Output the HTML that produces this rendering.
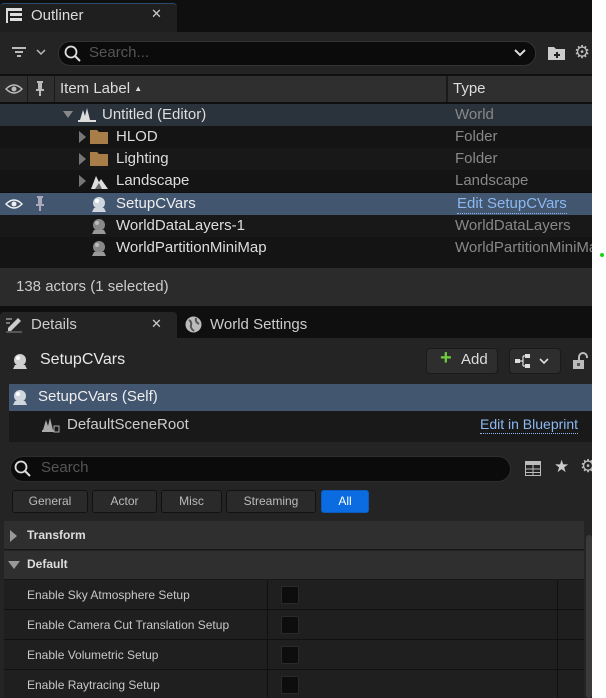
<!DOCTYPE html>
<html><head><meta charset="utf-8"><style>
*{margin:0;padding:0;box-sizing:border-box}
body{width:606px;height:698px;background:#fff;font-family:"Liberation Sans",sans-serif;position:relative;overflow:hidden;color:#c0c0c0}
.a{position:absolute}
.t{position:absolute;white-space:nowrap}
#main{position:absolute;left:0;top:0;width:592px;height:698px;background:#0f0f0f;overflow:hidden}
.row{position:absolute;left:0;width:592px;height:22px;font-size:15px;line-height:22px}
.prop{position:absolute;left:4px;width:580px;height:30px;background:#1f1f1f;border-bottom:1px solid #111;font-size:12px;line-height:30px}
.prop span{position:absolute;left:23px;color:#c8c8c8}
.prop i{position:absolute;left:263px;top:0;width:1px;height:30px;background:#111}
.prop b{position:absolute;left:277px;top:6px;width:18px;height:18px;background:#0d0d0d;border:1px solid #2a2a2a;border-radius:2px}
.prop u{position:absolute;left:553px;top:0;width:1px;height:30px;background:#111}
.fb{position:absolute;top:490px;height:23px;background:#2a2a2a;border:1px solid #111;border-radius:3px;font-size:12px;line-height:21px;text-align:center;color:#bbb}
</style></head><body>
<div id="main">
<div class="a" style="left:0;top:3px;width:177px;height:29px;background:#1f1f1f;border-radius:4px 4px 0 0;border-top:1px solid #2a4a6a"></div>
<svg class="a" style="left:6px;top:8px" width="16" height="15"><rect x="0" y="0" width="16" height="3" fill="#ddd"/><rect x="4" y="5" width="12" height="3" fill="#ddd"/><rect x="4" y="10" width="12" height="3" fill="#ddd"/><rect x="0" y="0" width="2" height="15" fill="#ddd"/></svg>
<div class="t" style="left:31px;top:7px;font-size:15px;color:#ddd">Outliner</div>
<div class="t" style="left:151px;top:6px;font-size:13px;color:#ccc">✕</div>
<div class="a" style="left:0;top:32px;width:592px;height:42px;background:#242424"></div>
<svg class="a" style="left:12px;top:45px" width="36" height="14"><rect x="0" y="2" width="14" height="2" fill="#bbb"/><rect x="3" y="6" width="8" height="2" fill="#bbb"/><rect x="5" y="10" width="4" height="2" fill="#bbb"/><path d="M25 5l4 4 4-4" stroke="#bbb" stroke-width="1.5" fill="none"/></svg>
<div class="a" style="left:58px;top:41px;width:478px;height:25px;background:#0b0b0b;border:1px solid #333;border-radius:12px"></div>
<svg class="a" style="left:64px;top:45px" width="18" height="18"><circle cx="7" cy="7" r="5.5" stroke="#ddd" stroke-width="1.8" fill="none"/><path d="M11 11l5 5" stroke="#ddd" stroke-width="2"/></svg>
<div class="t" style="left:89px;top:44px;font-size:15px;color:#555">Search...</div>
<svg class="a" style="left:514px;top:48px" width="12" height="10"><path d="M1 2l5 5 5-5" stroke="#ddd" stroke-width="2" fill="none"/></svg>
<svg class="a" style="left:548px;top:45px" width="17" height="15"><path d="M0 2h6l2 2h9v11H0z" fill="#ccc"/><path d="M9 7v6M6 10h6" stroke="#222" stroke-width="2"/></svg>
<div class="t" style="left:574px;top:42px;font-size:18px;color:#bbb">⚙</div>
<div class="a" style="left:0;top:76px;width:592px;height:26px;background:#2f2f2f"></div>
<div class="a" style="left:27px;top:76px;width:1px;height:26px;background:#1a1a1a"></div>
<div class="a" style="left:54px;top:76px;width:1px;height:26px;background:#1a1a1a"></div>
<div class="a" style="left:446px;top:76px;width:2px;height:26px;background:#1a1a1a"></div>
<svg class="a" style="left:5px;top:83px" width="18" height="12"><path d="M1 6q8-8 16 0q-8 8-16 0z" stroke="#bbb" stroke-width="1.5" fill="none"/><circle cx="9" cy="6" r="2.5" fill="#bbb"/></svg>
<svg class="a" style="left:35px;top:81px" width="10" height="16"><rect x="2" y="0" width="6" height="2" fill="#bbb"/><rect x="3" y="2" width="4" height="6" fill="#bbb"/><rect x="1" y="8" width="8" height="2" fill="#bbb"/><rect x="4" y="10" width="2" height="5" fill="#bbb"/></svg>
<div class="t" style="left:60px;top:80px;font-size:15px;color:#ddd">Item Label <span style="font-size:8px;position:relative;top:-2px">▲</span></div>
<div class="t" style="left:453px;top:80px;font-size:15px;color:#ddd">Type</div>
<div class="row" style="top:104px;background:#2a323c"><svg class="a" style="left:63px;top:7px" width="10" height="8"><path d="M0 0h10L5 7z" fill="#888"/></svg><svg class="a" style="left:78px;top:3px" width="18" height="15"><path d="M2 13l3-10 2 6 2-8 3 12z" fill="#ddd"/><rect x="0" y="13" width="18" height="2" fill="#ddd"/></svg><span class="t" style="left:102px;color:#ddd">Untitled (Editor)</span><span class="t" style="left:455px;color:#888">World</span></div>
<div class="row" style="top:126px;background:#141414"><svg class="a" style="left:79px;top:5px" width="7" height="12"><path d="M0 0v12l7-6z" fill="#777"/></svg><svg class="a" style="left:90px;top:4px" width="18" height="14"><path d="M0 0h7l2 2h9v12H0z" fill="#a87d47"/></svg><span class="t" style="left:116px;color:#ddd">HLOD</span><span class="t" style="left:455px;color:#888">Folder</span></div>
<div class="row" style="top:148px;background:#181818"><svg class="a" style="left:79px;top:5px" width="7" height="12"><path d="M0 0v12l7-6z" fill="#777"/></svg><svg class="a" style="left:90px;top:4px" width="18" height="14"><path d="M0 0h7l2 2h9v12H0z" fill="#a87d47"/></svg><span class="t" style="left:116px;color:#ddd">Lighting</span><span class="t" style="left:455px;color:#888">Folder</span></div>
<div class="row" style="top:170px;background:#141414"><svg class="a" style="left:79px;top:5px" width="7" height="12"><path d="M0 0v12l7-6z" fill="#777"/></svg><svg class="a" style="left:91px;top:3px" width="18" height="17"><path d="M0 16l5-13 3 6 2-3 7 10z" fill="#ddd"/><path d="M4 16l4-6 3 6z" fill="#666"/></svg><span class="t" style="left:116px;color:#ddd">Landscape</span><span class="t" style="left:455px;color:#888">Landscape</span></div>
<div class="row" style="top:193px;background:#435670"><svg class="a" style="left:5px;top:5px" width="18" height="12"><path d="M1 6q8-8 16 0q-8 8-16 0z" stroke="#eee" stroke-width="1.5" fill="none"/><circle cx="9" cy="6" r="2.5" fill="#eee"/></svg><svg class="a" style="left:35px;top:3px" width="10" height="16"><rect x="2" y="0" width="6" height="2" fill="#aab"/><rect x="3" y="2" width="4" height="6" fill="#aab"/><rect x="1" y="8" width="8" height="2" fill="#aab"/><rect x="4" y="10" width="2" height="5" fill="#aab"/></svg><svg class="a" style="left:91px;top:3px" width="16" height="17"><circle cx="8" cy="7" r="6" fill="#cfd6dd"/><circle cx="6" cy="5" r="2" fill="#fff"/><path d="M1 16l2-4h10l2 4z" fill="#cfd6dd"/></svg><span class="t" style="left:116px;color:#eee">SetupCVars</span><span class="t" style="left:457px;color:#8cb8f0;border-bottom:1px dotted #8cb8f0;line-height:18px;top:2px">Edit SetupCVars</span></div>
<div class="row" style="top:215px;background:#181818"><svg class="a" style="left:91px;top:3px" width="16" height="17"><circle cx="8" cy="7" r="6" fill="#888"/><circle cx="6" cy="5" r="2" fill="#bbb"/><path d="M1 16l2-4h10l2 4z" fill="#999"/></svg><span class="t" style="left:116px;color:#ddd">WorldDataLayers-1</span><span class="t" style="left:455px;color:#888">WorldDataLayers</span></div>
<div class="row" style="top:237px;background:#141414"><svg class="a" style="left:91px;top:3px" width="16" height="17"><circle cx="8" cy="7" r="6" fill="#888"/><circle cx="6" cy="5" r="2" fill="#bbb"/><path d="M1 16l2-4h10l2 4z" fill="#999"/></svg><span class="t" style="left:116px;color:#ddd">WorldPartitionMiniMap</span><span class="t" style="left:455px;color:#888">WorldPartitionMiniMap</span></div>
<div class="a" style="left:0;top:259px;width:592px;height:9px;background:#141414"></div>
<div class="a" style="left:0;top:268px;width:592px;height:38px;background:#2b2b2b"></div>
<div class="t" style="left:16px;top:278px;font-size:15px;color:#ccc">138 actors (1 selected)</div>
<div class="a" style="left:0;top:312px;width:177px;height:26px;background:#242424;border-radius:4px 4px 0 0"></div>
<svg class="a" style="left:6px;top:316px" width="17" height="17"><path d="M2 12L12 2l3 3L5 15H2z" fill="#ccc"/><path d="M0 16h16" stroke="#888" stroke-width="1"/><path d="M0 3h6M0 7h4" stroke="#aaa" stroke-width="1.3"/></svg>
<div class="t" style="left:31px;top:316px;font-size:15px;color:#ccc">Details</div>
<div class="t" style="left:151px;top:316px;font-size:13px;color:#ccc">✕</div>
<svg class="a" style="left:185px;top:316px" width="17" height="17"><circle cx="8.5" cy="8.5" r="8" fill="#bbb"/><path d="M4 4q3 2 2 5t3 6M11 2q-1 4 3 6" stroke="#555" stroke-width="2" fill="none"/></svg>
<div class="t" style="left:210px;top:316px;font-size:15px;color:#ccc">World Settings</div>
<div class="a" style="left:0;top:338px;width:592px;height:360px;background:#242424"></div>
<svg class="a" style="left:12px;top:352px" width="16" height="18"><circle cx="8" cy="8" r="6" fill="#cfcfcf"/><circle cx="6" cy="6" r="2" fill="#fff"/><path d="M1 17l2-4h10l2 4z" fill="#cfcfcf"/></svg>
<div class="t" style="left:40px;top:351px;font-size:16px;color:#e8e8e8">SetupCVars</div>
<div class="a" style="left:426px;top:348px;width:72px;height:26px;background:#2e2e2e;border:1px solid #1a1a1a;border-radius:4px"></div>
<div class="t" style="left:440px;top:347px;font-size:20px;color:#6fce3d;font-weight:bold">+</div>
<div class="t" style="left:461px;top:351px;font-size:15px;color:#ddd">Add</div>
<div class="a" style="left:509px;top:348px;width:52px;height:26px;background:#2e2e2e;border:1px solid #1a1a1a;border-radius:4px"></div>
<svg class="a" style="left:515px;top:353px" width="40" height="16"><rect x="0" y="6" width="5" height="4" fill="#ddd"/><rect x="10" y="1" width="5" height="4" fill="#ddd"/><rect x="10" y="11" width="5" height="4" fill="#ddd"/><path d="M5 8h3M8 3v10M8 3h2M8 13h2" stroke="#ddd" stroke-width="1.2" fill="none"/><path d="M25 6l4 4 4-4" stroke="#ddd" stroke-width="1.6" fill="none"/></svg>
<svg class="a" style="left:573px;top:352px" width="16" height="18"><path d="M6 8V5a4 4 0 0 1 8 0v1" stroke="#bbb" stroke-width="2" fill="none"/><rect x="0" y="8" width="11" height="9" fill="#bbb"/><rect x="4" y="11" width="3" height="3" fill="#555"/></svg>
<div class="a" style="left:9px;top:384px;width:583px;height:58px;background:#191919"></div>
<div class="a" style="left:9px;top:384px;width:583px;height:27px;background:#435670"></div>
<svg class="a" style="left:12px;top:388px" width="16" height="18"><circle cx="8" cy="8" r="6" fill="#d0d6dd"/><circle cx="6" cy="6" r="2" fill="#fff"/><path d="M1 17l2-4h10l2 4z" fill="#d0d6dd"/></svg>
<div class="t" style="left:38px;top:388px;font-size:15px;color:#eee">SetupCVars (Self)</div>
<svg class="a" style="left:42px;top:417px" width="18" height="16"><path d="M1 13l3-10 2 6 2-8 3 12z" fill="#aaa"/><rect x="0" y="13" width="12" height="2" fill="#aaa"/><rect x="12" y="9" width="5" height="6" fill="none" stroke="#aaa"/></svg>
<div class="t" style="left:67px;top:416px;font-size:15px;color:#ccc">DefaultSceneRoot</div>
<div class="t" style="left:480px;top:416px;font-size:14px;color:#8cb8f0;border-bottom:1px dotted #8cb8f0;line-height:17px">Edit in Blueprint</div>
<div class="a" style="left:10px;top:456px;width:501px;height:26px;background:#0b0b0b;border:1px solid #2e2e2e;border-radius:13px"></div>
<svg class="a" style="left:14px;top:460px" width="18" height="18"><circle cx="7" cy="7" r="5.5" stroke="#ddd" stroke-width="1.8" fill="none"/><path d="M11 11l5 5" stroke="#ddd" stroke-width="2"/></svg>
<div class="t" style="left:41px;top:459px;font-size:15px;color:#555">Search</div>
<svg class="a" style="left:525px;top:461px" width="16" height="15"><rect x="0.5" y="0.5" width="15" height="14" fill="none" stroke="#bbb"/><rect x="0" y="0" width="16" height="4" fill="#bbb"/><path d="M0 8h16M0 11.5h16M8 4v11" stroke="#bbb"/></svg>
<div class="t" style="left:554px;top:457px;font-size:17px;color:#ccc">★</div>
<div class="t" style="left:580px;top:456px;font-size:18px;color:#bbb">⚙</div>
<div class="fb" style="left:12px;width:76px">General</div>
<div class="fb" style="left:92px;width:65px">Actor</div>
<div class="fb" style="left:161px;width:61px">Misc</div>
<div class="fb" style="left:226px;width:90px">Streaming</div>
<div class="fb" style="left:321px;width:48px;background:#0a6ce0;color:#fff;border-color:#0a5cc0">All</div>
<div class="a" style="left:4px;top:521px;width:580px;height:29px;background:#2f2f2f;border-bottom:1px solid #161616"></div>
<svg class="a" style="left:10px;top:530px" width="8" height="12"><path d="M0 0v12l7-6z" fill="#999"/></svg>
<div class="t" style="left:27px;top:528px;font-size:12px;font-weight:bold;color:#ddd">Transform</div>
<div class="a" style="left:4px;top:551px;width:580px;height:29px;background:#2f2f2f;border-bottom:1px solid #161616"></div>
<svg class="a" style="left:8px;top:561px" width="12" height="9"><path d="M0 0h12L6 8z" fill="#999"/></svg>
<div class="t" style="left:27px;top:557px;font-size:12px;font-weight:bold;color:#ddd">Default</div>
<div class="prop" style="top:580px"><span>Enable Sky Atmosphere Setup</span><i></i><b></b><u></u></div>
<div class="prop" style="top:610px"><span>Enable Camera Cut Translation Setup</span><i></i><b></b><u></u></div>
<div class="prop" style="top:640px"><span>Enable Volumetric Setup</span><i></i><b></b><u></u></div>
<div class="prop" style="top:670px"><span>Enable Raytracing Setup</span><i></i><b></b><u></u></div>
<div class="a" style="left:586px;top:535px;width:6px;height:163px;background:#3a3a3a;border-radius:3px"></div>
</div>
<div class="a" style="left:600px;top:253px;width:4px;height:4px;background:#1ad21a;border-radius:2px"></div>
</body></html>
